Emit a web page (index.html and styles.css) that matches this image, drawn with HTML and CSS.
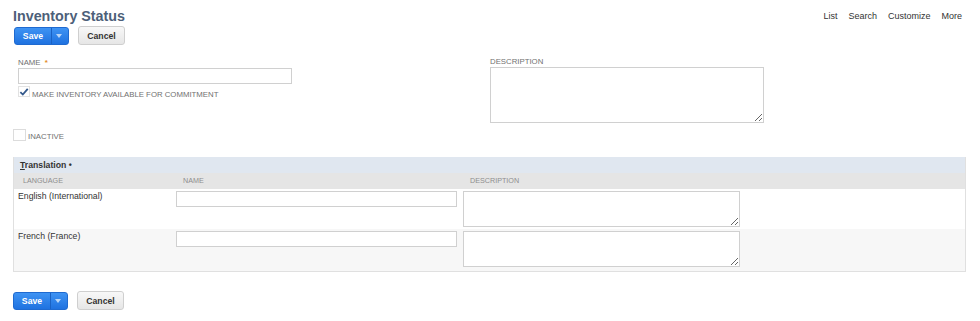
FILE: index.html
```html
<!DOCTYPE html>
<html lang="en">
<head>
    <meta charset="UTF-8">
    <meta name="viewport" content="width=device-width, initial-scale=1.0">
    <title>Inventory Status</title>
    <link rel="stylesheet" href="styles.css">
</head>
<body>
    <div class="page">
        <div class="page-header">
            <h1 class="page-title">Inventory Status</h1>
            <div class="page-links">
                <a href="#">List</a>
                <a href="#">Search</a>
                <a href="#">Customize</a>
                <a href="#">More</a>
            </div>
        </div>

        <div class="button-bar">
            <div class="btn-save">
                <button class="btn-save-main">Save</button>
                <button class="btn-save-menu"><span class="arrow"></span></button>
            </div>
            <button class="btn-cancel">Cancel</button>
        </div>

        <div class="form">
            <div class="form-col form-col-left">
                <label class="field-label">Name <span class="req">*</span></label>
                <input class="text-input name-input" type="text">
                <div class="check-row">
                    <span class="checkbox">
                        <svg width="11" height="10" viewBox="0 0 11 10">
                            <path d="M1.5 5.2 L4.2 7.8 L9.6 1.6" fill="none" stroke="#34598c" stroke-width="2"/>
                        </svg>
                    </span>
                    <span class="check-label">Make inventory available for commitment</span>
                </div>
            </div>
            <div class="form-col">
                <label class="field-label">Description</label>
                <textarea class="text-area desc-area"></textarea>
            </div>
        </div>

        <div class="check-row inactive-row">
            <span class="checkbox checkbox-empty"></span>
            <span class="check-label">Inactive</span>
        </div>

        <div class="sublist">
            <div class="sublist-title"><span class="key">T</span>ranslation &bull;</div>
            <div class="sublist-row sublist-head">
                <div class="cell cell-lang">Language</div>
                <div class="cell">Name</div>
                <div class="cell">Description</div>
            </div>
            <div class="sublist-row">
                <div class="cell cell-lang">English (International)</div>
                <div class="cell"><input class="text-input row-input" type="text"></div>
                <div class="cell"><textarea class="text-area row-area"></textarea></div>
            </div>
            <div class="sublist-row row-alt">
                <div class="cell cell-lang">French (France)</div>
                <div class="cell"><input class="text-input row-input" type="text"></div>
                <div class="cell"><textarea class="text-area row-area"></textarea></div>
            </div>
        </div>

        <div class="button-bar bottom-bar">
            <div class="btn-save">
                <button class="btn-save-main">Save</button>
                <button class="btn-save-menu"><span class="arrow"></span></button>
            </div>
            <button class="btn-cancel">Cancel</button>
        </div>
    </div>
</body>
</html>
```

FILE: styles.css
```css
body {
    margin: 0;
    font-family: "Liberation Sans", Arial, sans-serif;
    background-color: #fff;
    color: #333;
}

.page {
    padding: 0 14px 0 13px;
}

.page-header {
    display: flex;
    justify-content: space-between;
    align-items: flex-start;
    padding-top: 8px;
}

.page-title {
    margin: 0;
    font-size: 14.3px;
    line-height: 17px;
    font-weight: bold;
    color: #4d5f79;
}

.page-links {
    display: flex;
    gap: 11px;
    margin-right: 4px;
    font-size: 9px;
    line-height: 17px;
}

.page-links a {
    color: #333;
    text-decoration: none;
}

.button-bar {
    display: flex;
    gap: 9px;
    margin-top: 2px;
    margin-left: 1px;
}

.btn-save {
    display: flex;
    height: 18px;
    border: 1px solid #1f6ad0;
    border-radius: 3px;
    background: linear-gradient(#3e93f3, #1f72e0);
    box-sizing: border-box;
}

.btn-save button,
.btn-cancel {
    font-family: inherit;
    font-weight: bold;
    font-size: 8.7px;
    border: none;
    padding: 0;
    cursor: pointer;
}

.btn-save-main {
    width: 37px;
    background: none;
    color: #fff;
    border-right: 1px solid #1a62c4 !important;
}

.btn-save-menu {
    width: 16px;
    background: none;
    display: flex;
    align-items: center;
    justify-content: center;
}

.arrow {
    width: 0;
    height: 0;
    border-left: 3px solid transparent;
    border-right: 3px solid transparent;
    border-top: 4px solid #b9d6f7;
    margin-right: 2px;
}

.btn-cancel {
    width: 47px;
    height: 19px;
    margin-top: -1px;
    color: #333;
    border: 1px solid #cfcfcf !important;
    border-radius: 3px;
    background: linear-gradient(#f8f8f8, #e6e6e6);
    box-sizing: border-box;
}

.form {
    display: grid;
    grid-template-columns: 472px auto;
    padding-left: 5px;
    margin-top: 12px;
}

.form-col {
    display: flex;
    flex-direction: column;
    align-items: flex-start;
}

.form-col-left {
    padding-top: 1px;
}

.field-label {
    font-size: 7.8px;
    line-height: 10px;
    color: #707070;
    text-transform: uppercase;
}

.req {
    color: #e28a1b;
    font-weight: bold;
    margin-left: 2px;
}

.text-input {
    box-sizing: border-box;
    height: 16px;
    border: 1px solid #d0d0d0;
    margin: 0;
    padding: 0 3px;
}

.text-area {
    box-sizing: border-box;
    border: 1px solid #d0d0d0;
    margin: 0;
    display: block;
}

.name-input {
    width: 274px;
}

.desc-area {
    width: 274px;
    height: 56px;
}

.check-row {
    display: flex;
    align-items: flex-start;
    margin-top: 2px;
}

.checkbox {
    box-sizing: border-box;
    width: 12px;
    height: 11px;
    border: 1px solid #e2e2e2;
    display: flex;
    align-items: center;
    justify-content: center;
}

.check-label {
    font-size: 7.8px;
    line-height: 11px;
    color: #707070;
    text-transform: uppercase;
    margin-top: 3px;
    margin-left: 2px;
}

.inactive-row {
    margin-top: 6px;
}

.checkbox-empty {
    width: 13px;
    height: 12px;
    border-color: #dcdcdc;
}

.inactive-row .check-label {
    margin-top: 2px;
}

.sublist {
    margin-top: 15px;
    border: 1px solid #e0e0e0;
    border-top: none;
}

.sublist-title {
    background-color: #e0e7f0;
    font-size: 8.7px;
    font-weight: bold;
    line-height: 16px;
    padding-left: 6px;
    color: #333;
}

.key {
    text-decoration: underline;
}

.sublist-row {
    display: grid;
    grid-template-columns: 162px 287px 1fr;
    padding: 2px 0;
    height: 40px;
    box-sizing: border-box;
}

.sublist-head {
    background-color: #e5e5e5;
    height: 16px;
    padding: 0;
}

.sublist-head .cell {
    font-size: 7.2px;
    line-height: 16px;
    color: #8e8e8e;
    text-transform: uppercase;
    padding-left: 7px;
}

.sublist-head .cell-lang {
    padding-left: 9px;
}

.cell-lang {
    font-size: 8.7px;
    line-height: 11px;
    padding-left: 4px;
    color: #333;
}

.row-alt {
    background-color: #f7f7f7;
    height: 42px;
}

.row-input {
    width: 281px;
    display: block;
}

.row-area {
    width: 277px;
    height: 36px;
}

.bottom-bar {
    margin-top: 20px;
    margin-left: 0;
}
```
